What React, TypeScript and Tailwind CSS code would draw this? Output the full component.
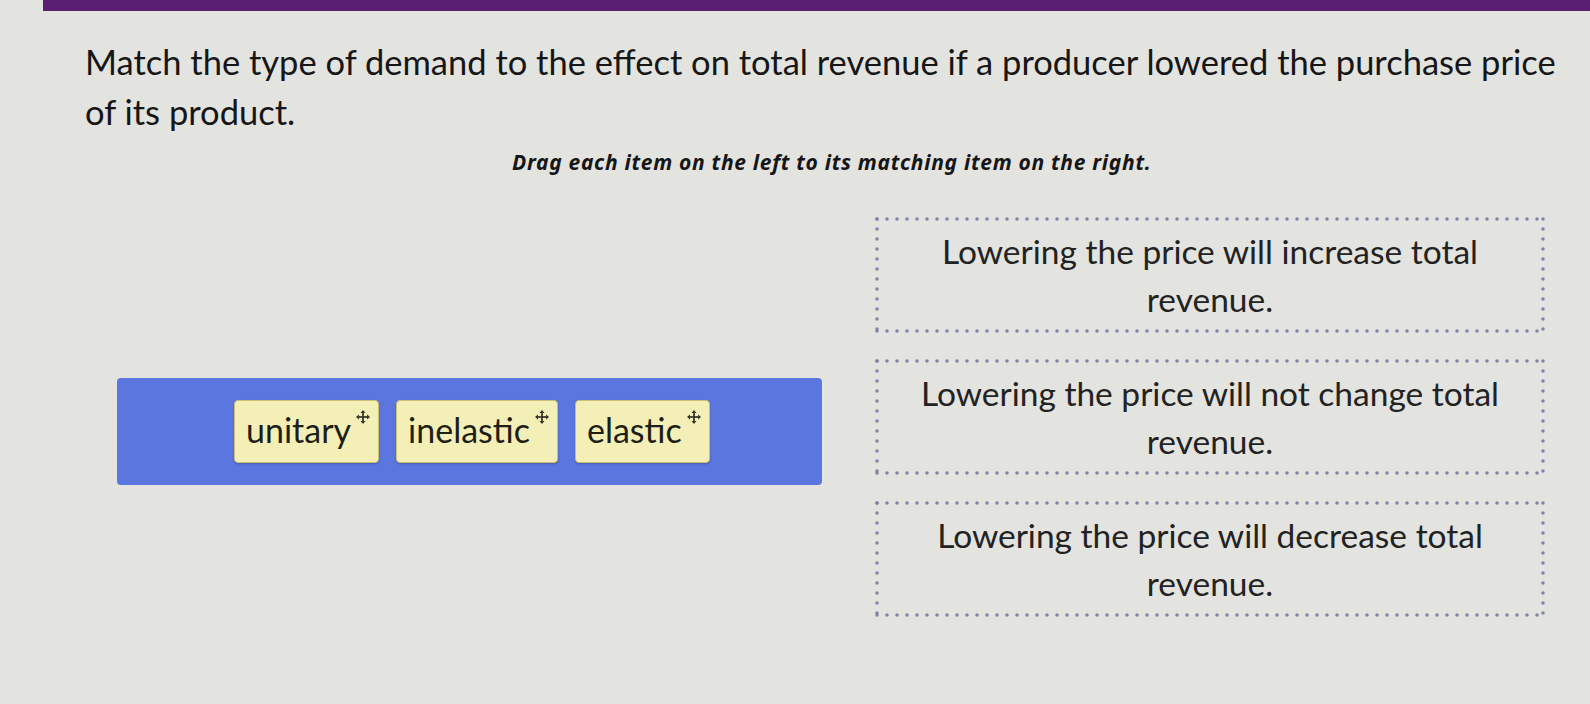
import React from "react";

const font = { fontFamily: '"Lato", "Noto Sans", sans-serif' };

function MoveGlyph() {
  return (
    <svg width="14" height="14" viewBox="0 0 13 13" className="shrink-0">
      <g fill="#34342a">
        <rect x="5.7" y="2" width="1.6" height="9" />
        <rect x="2" y="5.7" width="9" height="1.6" />
        <polygon points="6.5,0 4.2,2.7 8.8,2.7" />
        <polygon points="6.5,13 4.2,10.3 8.8,10.3" />
        <polygon points="0,6.5 2.7,4.2 2.7,8.8" />
        <polygon points="13,6.5 10.3,4.2 10.3,8.8" />
      </g>
    </svg>
  );
}

// Round, widely spaced dots drawn around a drop zone.
function DottedFrame() {
  const dot = {
    stroke: "#7d84a6",
    strokeWidth: 3.5,
    strokeLinecap: "round" as const,
    strokeDasharray: "0 10",
  };
  return (
    <svg className="pointer-events-none absolute inset-[2px] h-[calc(100%-4px)] w-[calc(100%-4px)] overflow-visible">
      <line x1="0" y1="0" x2="100%" y2="0" {...dot} />
      <line x1="0" y1="100%" x2="100%" y2="100%" {...dot} />
      <line x1="0" y1="0" x2="0" y2="100%" {...dot} />
      <line x1="100%" y1="0" x2="100%" y2="100%" {...dot} />
    </svg>
  );
}

function Chip({ label }: { label: string }) {
  return (
    <div className="flex h-[63px] items-start gap-[5px] rounded-[4px] border border-[#cdbf78] bg-[#f3efb6] pl-[11px] pr-[8px] pt-[8px] shadow-[0_1px_2px_rgba(0,0,0,0.25)]">
      <span className="text-[34px] leading-[42px] text-[#1e1e18]">{label}</span>
      <span className="pt-[1px]">
        <MoveGlyph />
      </span>
    </div>
  );
}

function Target({ text }: { text: string }) {
  return (
    <div className="relative flex h-[116px] items-center justify-center px-[36px] text-center">
      <DottedFrame />
      <p className="text-[33.5px] leading-[48px] text-[#222]">{text}</p>
    </div>
  );
}

export default function App() {
  return (
    <div className="min-h-[704px] w-[1590px] bg-[#e3e3e0]" style={font}>
      <div className="pl-[43px]">
        <div className="h-[11px] bg-[#5a1f70]" />
      </div>
      <div className="pl-[85px] pr-[30px]">
        <h1 className="pt-[26px] text-[34.5px] leading-[50px] text-[#161616]">
          Match the type of demand to the effect on total revenue if a producer lowered the purchase price of its product.
        </h1>
        <p
          className="mt-[11px] pl-[427px] text-[21px] font-bold italic leading-[28px] tracking-[0.7px] text-[#161616]"
          style={{ fontFamily: '"Noto Sans", sans-serif' }}
        >
          Drag each item on the left to its matching item on the right.
        </p>
        <div className="mt-[41px] flex items-start">
          <div className="w-[737px] pl-[32px] pt-[161px]">
            <div className="flex h-[107px] w-[705px] items-center gap-[17px] rounded-[4px] bg-[#5b77df] pl-[117px]">
              <Chip label="unitary" />
              <Chip label="inelastic" />
              <Chip label="elastic" />
            </div>
          </div>
          <div className="ml-[53px] flex w-[670px] flex-col gap-[26px]">
            <Target text="Lowering the price will increase total revenue." />
            <Target text="Lowering the price will not change total revenue." />
            <Target text="Lowering the price will decrease total revenue." />
          </div>
        </div>
      </div>
    </div>
  );
}
